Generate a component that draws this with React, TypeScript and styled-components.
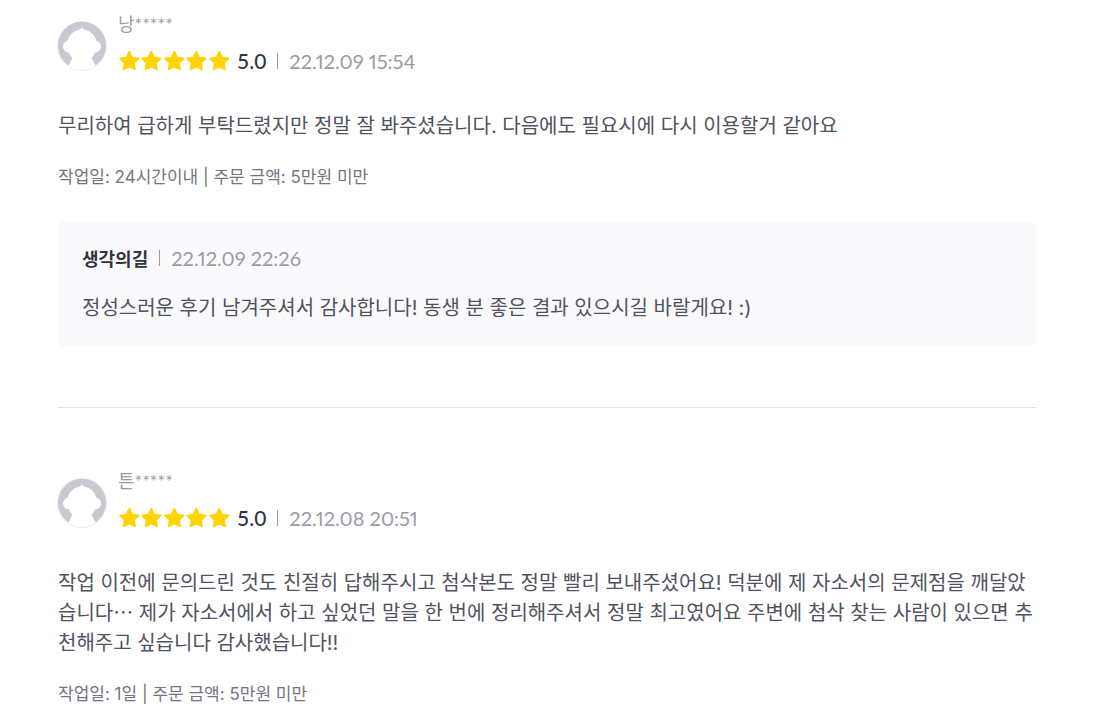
import React from "react";
import styled, { createGlobalStyle } from "styled-components";

const GlobalStyle = createGlobalStyle`
  * { box-sizing: border-box; }
  body {
    margin: 0;
    background: #ffffff;
    color: #50535f;
    font-family: Inter, "Noto Sans CJK KR", sans-serif;
    font-size: 20px;
    line-height: 30px;
  }
  p, h3, ul { margin: 0; padding: 0; font-weight: 400; }
`;

const ReviewList = styled.ul`
  list-style: none;
  padding: 11px 81px 20px 58px;
`;

const ReviewItem = styled.li`
  & + & {
    margin-top: 60px;
    border-top: 1px solid #e1e1e5;
    padding-top: 60px;
  }
`;

const Header = styled.header`
  display: flex;
  align-items: flex-start;
  gap: 12px;
`;

const Avatar = styled.svg`
  flex: none;
  width: 50px;
  height: 50px;
  margin: 10px -1px 0;
`;

const Author = styled.div`
  display: flex;
  flex-direction: column;
  gap: 11px;
`;

const Name = styled.h3`
  font-family: Lato, "Noto Sans CJK KR", sans-serif;
  font-size: 18px;
  line-height: 26px;
  color: #9a9ba7;
`;

const InfoRow = styled.div`
  display: flex;
  align-items: center;
  line-height: 26px;
`;

const Stars = styled.span`
  display: flex;
`;

const StarIcon = styled.svg`
  width: 23px;
  height: 23px;
  margin-right: -1px;
  fill: #ffd400;
  stroke: #ffd400;

  &:nth-child(even) {
    margin-right: 0;
  }
`;

const Score = styled.strong`
  margin-left: 7px;
  font-family: Lato, sans-serif;
  font-weight: 500;
  font-size: 21px;
  color: #303441;
`;

const Separator = styled.span`
  width: 1px;
  height: 16px;
  margin: 0 11px;
  background: #9a9ba7;
`;

const DateText = styled.time`
  font-family: Lato, sans-serif;
  font-size: 20px;
  font-variant-numeric: proportional-nums;
  color: #9a9ba7;
`;

const Content = styled.p`
  margin-top: 37px;
  white-space: pre-line;
`;

const Meta = styled.p`
  margin-top: 23px;
  font-size: 17px;
  line-height: 26px;
  color: #72757f;
`;

const Reply = styled.section`
  margin-top: 31px;
  padding: 24px;
  border-radius: 6px;
  background: #fafafc;
`;

const Seller = styled.strong`
  font-family: "Noto Sans CJK KR", sans-serif;
  font-size: 18px;
  font-weight: 700;
  color: #303441;
`;

const ReplyContent = styled.p`
  margin-top: 22px;
`;

interface ReviewData {
  name: string;
  date: string;
  content: string;
  period: string;
  price: string;
  reply?: { seller: string; date: string; content: string };
}

const reviews: ReviewData[] = [
  {
    name: "낭*****",
    date: "22.12.09 15:54",
    content:
      "무리하여 급하게 부탁드렸지만 정말 잘 봐주셨습니다. 다음에도 필요시에 다시 이용할거 같아요",
    period: "24시간이내",
    price: "5만원 미만",
    reply: {
      seller: "생각의길",
      date: "22.12.09 22:26",
      content:
        "정성스러운 후기 남겨주셔서 감사합니다! 동생 분 좋은 결과 있으시길 바랄게요! :)",
    },
  },
  {
    name: "튼*****",
    date: "22.12.08 20:51",
    content:
      "작업 이전에 문의드린 것도 친절히 답해주시고 첨삭본도 정말 빨리 보내주셨어요! 덕분에 제 자소서의 문제점을 깨달았\n습니다⋯ 제가 자소서에서 하고 싶었던 말을 한 번에 정리해주셔서 정말 최고였어요 주변에 첨삭 찾는 사람이 있으면 추\n천해주고 싶습니다 감사했습니다!!",
    period: "1일",
    price: "5만원 미만",
  },
];

const Star = () => (
  <StarIcon viewBox="0 0 23 23" strokeWidth="2" strokeLinejoin="round">
    <path d="M11.300 2l2.800 5.700 6.200.9-4.500 4.400 1.100 6.200-5.600-2.900-5.600 2.900 1.100-6.200L2.300 8.600l6.200-.9z" />
  </StarIcon>
);

const DefaultAvatar = () => (
  <Avatar viewBox="0 0 50 50" aria-hidden="true">
    <circle cx="25" cy="25" r="24.500" fill="#ffffff" stroke="#ececf0" />
    <path
      fill="#c9c9d4"
      d="M11.500 44.500A24 24 0 1 1 38.500 44.500L34.500 37c1.500-1.500 2.700-3.500 3.500-5.500 3.600-.3 6-2.700 6-6 0-3-2-5.200-4.700-5.700C38 14.500 34.500 10.500 29 9c-1.500-.5-3-.7-4-2.500-1 1.800-2.500 2-4 2.500-5.500 1.500-9 5.500-10.300 10.800C8 20.300 6 22.500 6 25.500c0 3.300 2.400 5.700 6 6 .8 2 2 4 3.500 5.500z"
    />
  </Avatar>
);

const Review = ({ data }: { data: ReviewData }) => (
  <ReviewItem>
    <Header>
      <DefaultAvatar />
      <Author>
        <Name>{data.name}</Name>
        <InfoRow>
          <Stars role="img" aria-label="별점 5점">
            {[1, 2, 3, 4, 5].map((n) => (
              <Star key={n} />
            ))}
          </Stars>
          <Score>5.0</Score>
          <Separator />
          <DateText>{data.date}</DateText>
        </InfoRow>
      </Author>
    </Header>
    <Content>{data.content}</Content>
    <Meta>
      작업일: {data.period} | 주문 금액: {data.price}
    </Meta>
    {data.reply && (
      <Reply>
        <InfoRow>
          <Seller>{data.reply.seller}</Seller>
          <Separator />
          <DateText>{data.reply.date}</DateText>
        </InfoRow>
        <ReplyContent>{data.reply.content}</ReplyContent>
      </Reply>
    )}
  </ReviewItem>
);

export default function App() {
  return (
    <>
      <GlobalStyle />
      <main lang="ko">
        <ReviewList>
          {reviews.map((review) => (
            <Review key={review.name} data={review} />
          ))}
        </ReviewList>
      </main>
    </>
  );
}
